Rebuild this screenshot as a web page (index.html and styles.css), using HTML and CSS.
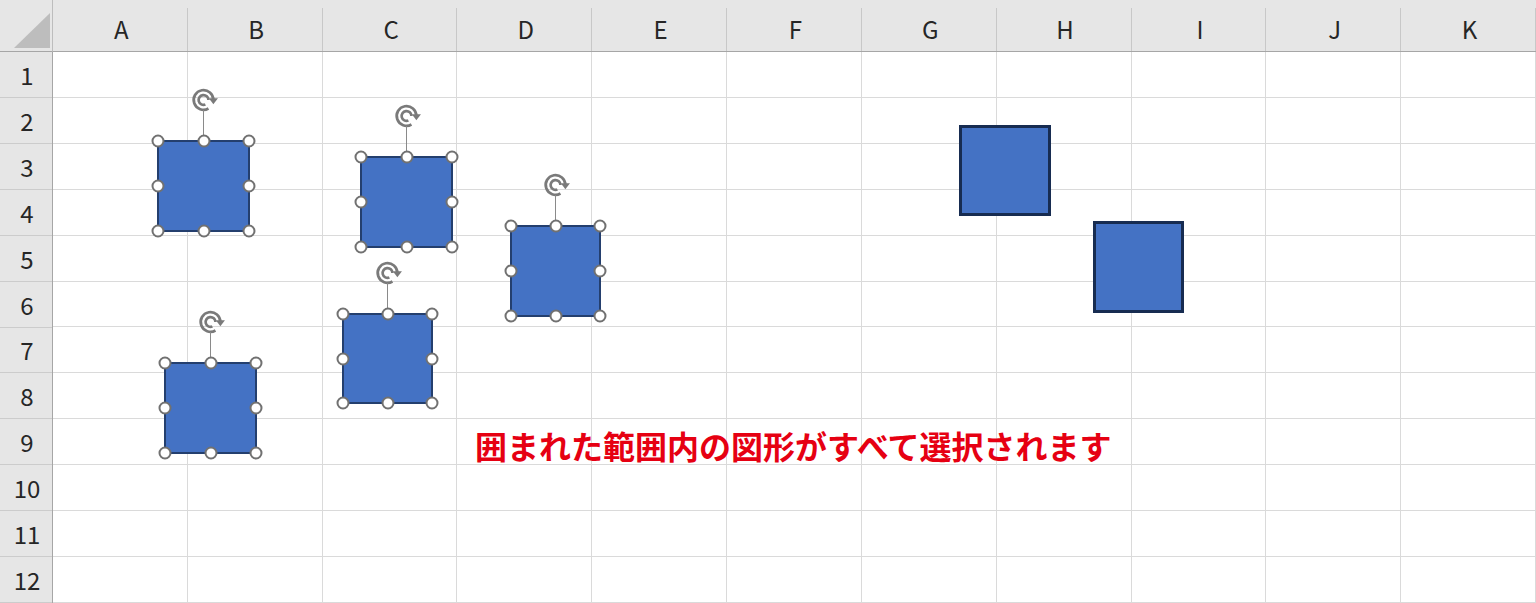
FILE: index.html
```html
<!DOCTYPE html>
<html>
<head>
    <meta charset="utf-8" />
    <title>図形の選択</title>
    <link rel="stylesheet" href="styles.css">
</head>
<body>
    <div class="sheet">
        <div class="corner"><div class="tri"></div></div>
        <div class="colhead">
            <div>A</div><div>B</div><div>C</div><div>D</div><div>E</div><div>F</div>
            <div>G</div><div>H</div><div>I</div><div>J</div><div>K</div>
        </div>
        <div class="rowhead">
            <div>1</div><div>2</div><div>3</div><div>4</div><div>5</div><div>6</div>
            <div>7</div><div>8</div><div>9</div><div>10</div><div>11</div><div>12</div>
        </div>
        <div class="cells"></div>

        <!-- selected shapes -->
        <div class="shape sel s1">
            <div class="rot">
                <svg width="32" height="30" viewBox="0 0 26 24"><path d="M19 12 A8 8 0 1 0 15 18.9" /><path d="M15 12 A4 4 0 1 0 12.5 15.7" /><polygon points="15.3,10.5 22.7,10.5 19,15.5" /></svg>
            </div>
            <span class="h tl"></span><span class="h tc"></span><span class="h tr"></span>
            <span class="h ml"></span><span class="h mr"></span>
            <span class="h bl"></span><span class="h bc"></span><span class="h br"></span>
        </div>
        <div class="shape sel s2">
            <div class="rot">
                <svg width="32" height="30" viewBox="0 0 26 24"><path d="M19 12 A8 8 0 1 0 15 18.9" /><path d="M15 12 A4 4 0 1 0 12.5 15.7" /><polygon points="15.3,10.5 22.7,10.5 19,15.5" /></svg>
            </div>
            <span class="h tl"></span><span class="h tc"></span><span class="h tr"></span>
            <span class="h ml"></span><span class="h mr"></span>
            <span class="h bl"></span><span class="h bc"></span><span class="h br"></span>
        </div>
        <div class="shape sel s3">
            <div class="rot">
                <svg width="32" height="30" viewBox="0 0 26 24"><path d="M19 12 A8 8 0 1 0 15 18.9" /><path d="M15 12 A4 4 0 1 0 12.5 15.7" /><polygon points="15.3,10.5 22.7,10.5 19,15.5" /></svg>
            </div>
            <span class="h tl"></span><span class="h tc"></span><span class="h tr"></span>
            <span class="h ml"></span><span class="h mr"></span>
            <span class="h bl"></span><span class="h bc"></span><span class="h br"></span>
        </div>
        <div class="shape sel s4">
            <div class="rot">
                <svg width="32" height="30" viewBox="0 0 26 24"><path d="M19 12 A8 8 0 1 0 15 18.9" /><path d="M15 12 A4 4 0 1 0 12.5 15.7" /><polygon points="15.3,10.5 22.7,10.5 19,15.5" /></svg>
            </div>
            <span class="h tl"></span><span class="h tc"></span><span class="h tr"></span>
            <span class="h ml"></span><span class="h mr"></span>
            <span class="h bl"></span><span class="h bc"></span><span class="h br"></span>
        </div>
        <div class="shape sel s5">
            <div class="rot">
                <svg width="32" height="30" viewBox="0 0 26 24"><path d="M19 12 A8 8 0 1 0 15 18.9" /><path d="M15 12 A4 4 0 1 0 12.5 15.7" /><polygon points="15.3,10.5 22.7,10.5 19,15.5" /></svg>
            </div>
            <span class="h tl"></span><span class="h tc"></span><span class="h tr"></span>
            <span class="h ml"></span><span class="h mr"></span>
            <span class="h bl"></span><span class="h bc"></span><span class="h br"></span>
        </div>

        <!-- not selected -->
        <div class="shape s6"></div>
        <div class="shape s7"></div>

        <div class="note">囲まれた範囲内の図形がすべて選択されます</div>
    </div>
</body>
</html>
```

FILE: styles.css
```css
body {
    margin: 0;
    background-color: #ffffff;
    font-family: "Noto Sans CJK JP", "Noto Sans", sans-serif;
}
.sheet {
    position: relative;
    width: 1536px;
    height: 603px;
    display: grid;
    grid-template-columns: 53px 1fr;
    grid-template-rows: 52px 1fr;
    overflow: hidden;
}
.corner {
    background-color: #e6e6e6;
    border-right: 1px solid #bdbdbd;
    border-bottom: 1px solid #a6a6a6;
    box-sizing: border-box;
    position: relative;
}
.tri {
    position: absolute;
    left: 14px;
    top: 13px;
    width: 36px;
    height: 35px;
    background-color: #bdbdbd;
    clip-path: polygon(100% 0, 100% 100%, 0 100%);
}
.colhead {
    display: flex;
    background-color: #e6e6e6;
    border-bottom: 1px solid #a6a6a6;
    box-sizing: border-box;
}
.colhead div {
    flex: 1;
    margin-top: 8px;
    border-right: 1px solid #c8c8c8;
    display: flex;
    align-items: center;
    justify-content: center;
    font-size: 24px;
    color: #262626;
    padding-bottom: 2px;
    padding-left: 3px;
}
.rowhead {
    display: flex;
    flex-direction: column;
    background-color: #e6e6e6;
    border-right: 1px solid #a6a6a6;
}
.rowhead div {
    flex: 1;
    border-bottom: 1px solid #cccccc;
    display: flex;
    align-items: center;
    justify-content: center;
    font-size: 24px;
    color: #262626;
    padding-left: 2px;
}
.cells {
    background-image:
        repeating-linear-gradient(90deg, transparent 0, transparent calc(100% / 11 - 1px), #dadada calc(100% / 11 - 1px), #dadada calc(100% / 11)),
        repeating-linear-gradient(180deg, transparent 0, transparent calc(100% / 12 - 1px), #dadada calc(100% / 12 - 1px), #dadada calc(100% / 12));
}

/* shapes */
.shape {
    position: absolute;
    box-sizing: border-box;
    background-color: #4472c4;
    border: 3px solid #172c51;
}
.sel {
    border: 2px solid #243f6e;
    width: 93px;
    height: 92px;
}
.s1 { left: 157px; top: 140px; }
.s2 { left: 360px; top: 156px; }
.s3 { left: 510px; top: 225px; width: 91px; }
.s4 { left: 342px; top: 313px; width: 91px; height: 91px; }
.s5 { left: 164px; top: 362px; }
.s6 { left: 959px; top: 125px; width: 92px; height: 91px; }
.s7 { left: 1093px; top: 221px; width: 91px; height: 92px; }

.h {
    position: absolute;
    width: 9px;
    height: 9px;
    border: 2px solid #717171;
    border-radius: 50%;
    background-color: #ffffff;
    transform: translate(-50%, -50%);
}
.tl { left: -1px; top: -1px; }
.tc { left: 50%; top: -1px; }
.tr { left: calc(100% + 1px); top: -1px; }
.ml { left: -1px; top: 50%; }
.mr { left: calc(100% + 1px); top: 50%; }
.bl { left: -1px; top: calc(100% + 1px); }
.bc { left: 50%; top: calc(100% + 1px); }
.br { left: calc(100% + 1px); top: calc(100% + 1px); }

.rot {
    position: absolute;
    left: 50%;
    top: -57px;
    width: 32px;
    height: 56px;
    margin-left: -14px;
}
.rot::after {
    content: "";
    position: absolute;
    left: 13px;
    top: 25px;
    width: 1px;
    height: 31px;
    background-color: #8a8a8a;
}
.rot svg path {
    fill: none;
    stroke: #7a7a7a;
    stroke-width: 2.2;
}
.rot svg polygon {
    fill: #7a7a7a;
}

.note {
    position: absolute;
    left: 475px;
    top: 426px;
    font-size: 32px;
    font-weight: bold;
    color: #e60012;
    line-height: 38px;
}
```
